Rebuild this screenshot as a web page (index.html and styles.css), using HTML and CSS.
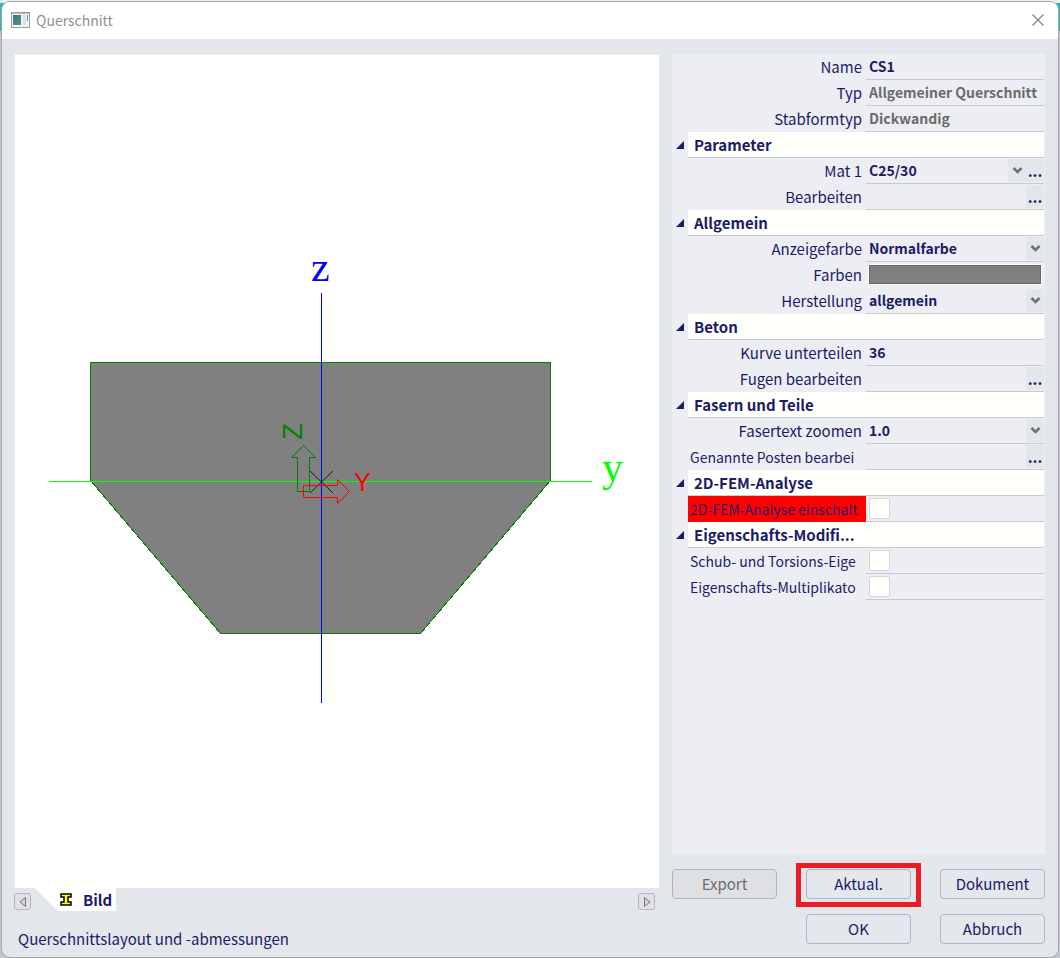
FILE: index.html
```html
<!DOCTYPE html>
<html lang="de">
<head>
<meta charset="utf-8">
<title>Querschnitt</title>
<link rel="stylesheet" href="styles.css">
</head>
<body>
<main class="dialog">
  <header class="titlebar">
    <svg class="app-icon" width="19" height="16" viewBox="0 0 19 16" aria-hidden="true">
      <defs><linearGradient id="app" x1="0" y1="0" x2="1" y2="1"><stop offset="0" stop-color="#3f6f9c"/><stop offset="1" stop-color="#4f9a70"/></linearGradient></defs>
      <rect x="0.5" y="0.5" width="18" height="15" fill="#f4f4f4" stroke="#9a9da8"/>
      <path d="M1 1.5h17" stroke="#b9bcc6"/>
      <rect x="2" y="3" width="8" height="10" fill="url(#app)"/>
      <rect x="12" y="3" width="3" height="10" fill="#e2e2e2"/>
      <path d="M16.500 3v6" stroke="#5c9a8c"/>
    </svg>
    <h1 class="title">Querschnitt</h1>
    <button class="close" aria-label="Schließen">
      <svg width="12" height="12" viewBox="0 0 12 12"><path d="M0.500 0.500l11 11M11.500 0.500l-11 11" stroke="#858585" stroke-width="1.200" fill="none"/></svg>
    </button>
  </header>

  <div class="content">
    <section class="preview">
      <svg class="drawing" viewBox="15 55 644 833" role="img" aria-label="Querschnitt">
        <g shape-rendering="crispEdges">
          <path d="M90.500 362.500H550.500V480.500L420.500 633.500H220.500L90.500 480.500Z" fill="#808080" stroke="#008000"/>
          <path d="M49 481.500H592" stroke="#00ff00"/>
          <path d="M321.500 293V703" stroke="#0000ff"/>
        </g>
        <path d="M310 471l23 22M333 471l-23 22" stroke="#1c1c1c"/>
        <path d="M297.500 491.500V457.500H291.500L303.500 445.500L315.500 457.500H309.500V491.500Z" fill="none" stroke="#008000"/>
        <path d="M303.500 485.500H337.500V479.500L349.500 491.500L337.500 503.500V497.500H303.500Z" fill="none" stroke="#ff0000"/>
        <text class="local-y" x="354" y="491">Y</text>
        <text class="local-z" transform="translate(302 440) rotate(-90)">Z</text>
        <text class="axis-z" x="311" y="281">z</text>
        <text class="axis-y" x="602" y="481">y</text>
      </svg>
      <nav class="tabs">
        <button class="scroll" aria-label="Zurück"><svg width="8" height="10" viewBox="0 0 8 10"><path d="M6.500 0.500V9.500L1 5Z" fill="#d5d5d5" stroke="#777"/></svg></button>
        <button class="tab">
          <svg width="12" height="13" viewBox="0 0 12 13" aria-hidden="true"><path d="M1 1H11V4H8V9H11V12H1V9H4V4H1Z" fill="#ffff00" stroke="#000" stroke-width="1.500"/></svg>
          Bild
        </button>
        <button class="scroll scroll-next" aria-label="Weiter"><svg width="8" height="10" viewBox="0 0 8 10"><path d="M1.500 0.500V9.500L7 5Z" fill="#d5d5d5" stroke="#777"/></svg></button>
      </nav>
      <p class="status">Querschnittslayout und -abmessungen</p>
    </section>

    <aside class="side">
      <div class="props">
        <div class="row"><label class="label" for="name">Name</label><div class="value"><input id="name" class="field" value="CS1"></div></div>
        <div class="row"><label class="label" for="typ">Typ</label><div class="value"><input id="typ" class="field muted" value="Allgemeiner Querschnitt" readonly></div></div>
        <div class="row"><label class="label" for="stab">Stabformtyp</label><div class="value"><input id="stab" class="field muted" value="Dickwandig" readonly></div></div>
        <h2 class="group"><span class="group-name">Parameter</span></h2>
        <div class="row"><label class="label" for="mat">Mat 1</label><div class="value"><select id="mat" class="field select"><option>C25/30</option></select><button class="more" aria-label="Mat 1 auswählen">...</button></div></div>
        <div class="row"><span class="label">Bearbeiten</span><div class="value"><button class="more" aria-label="Bearbeiten">...</button></div></div>
        <h2 class="group"><span class="group-name">Allgemein</span></h2>
        <div class="row"><label class="label" for="anz">Anzeigefarbe</label><div class="value"><select id="anz" class="field select"><option>Normalfarbe</option></select></div></div>
        <div class="row"><span class="label">Farben</span><div class="value plain"><button class="swatch" aria-label="Farben"></button></div></div>
        <div class="row"><label class="label" for="her">Herstellung</label><div class="value"><select id="her" class="field select"><option>allgemein</option></select></div></div>
        <h2 class="group"><span class="group-name">Beton</span></h2>
        <div class="row"><label class="label" for="kurve">Kurve unterteilen</label><div class="value"><input id="kurve" class="field" value="36"></div></div>
        <div class="row"><span class="label">Fugen bearbeiten</span><div class="value"><button class="more" aria-label="Fugen bearbeiten">...</button></div></div>
        <h2 class="group"><span class="group-name">Fasern und Teile</span></h2>
        <div class="row"><label class="label" for="faser">Fasertext zoomen</label><div class="value"><select id="faser" class="field select"><option>1.0</option></select></div></div>
        <div class="row"><span class="label long">Genannte Posten bearbei</span><div class="value"><button class="more" aria-label="Genannte Posten bearbeiten">...</button></div></div>
        <h2 class="group"><span class="group-name">2D-FEM-Analyse</span></h2>
        <div class="row"><label class="label long alert" for="fem">2D-FEM-Analyse einschalt</label><div class="value"><input id="fem" class="check" type="checkbox"></div></div>
        <h2 class="group"><span class="group-name">Eigenschafts-Modifi...</span></h2>
        <div class="row"><label class="label long" for="schub">Schub- und Torsions-Eige</label><div class="value"><input id="schub" class="check" type="checkbox"></div></div>
        <div class="row"><label class="label long" for="multi">Eigenschafts-Multiplikato</label><div class="value"><input id="multi" class="check" type="checkbox"></div></div>
      </div>
      <div class="actions">
        <button class="btn" disabled>Export</button>
        <button class="btn marked">Aktual.</button>
        <button class="btn">Dokument</button>
        <button class="btn ok">OK</button>
        <button class="btn">Abbruch</button>
      </div>
    </aside>
  </div>
</main>
</body>
</html>
```
FILE: styles.css
```css
* { box-sizing: border-box; }

body {
  margin: 0;
  padding: 1px 1px 0;
  min-height: 100vh;
  display: flex;
  background: linear-gradient(#eeeeee 3px, #21bdb4 3px, #21bdb4 31px, #c3c6d0 31px);
  color: #1b1b6a;
  font: 15px/22px "Noto Sans CJK JP", "Noto Sans", sans-serif;
}

button, input, select {
  font: inherit;
  color: inherit;
  margin: 0;
  padding: 0;
  border: 0;
  border-radius: 0;
  background: none;
}

.dialog {
  flex: 1;
  min-width: 0;
  display: flex;
  flex-direction: column;
  overflow: hidden;
  border: 1px solid #a5a5a8;
  border-radius: 9px;
  background: #e3e6eb;
}

.titlebar {
  display: flex;
  align-items: center;
  gap: 6px;
  height: 37px;
  padding: 0 14px 2px 9px;
  background: #fff;
}

.title {
  flex: 1;
  margin: 0;
  font-size: 14px;
  font-weight: 400;
  color: #929292;
}

.close { display: flex; }

.content {
  flex: 1;
  display: flex;
  gap: 12px;
  padding: 15px 13px 0 12px;
}

.preview {
  flex: 1;
  min-width: 0;
  display: flex;
  flex-direction: column;
}

.drawing {
  flex: 1;
  min-height: 0;
  width: 100%;
  background: #fff;
  border: 1px solid #f0f0ea;
  border-bottom: 0;
}

.axis-y, .axis-z { font: 42px "Liberation Serif", serif; }
.axis-y { fill: #00ff00; }
.axis-z { fill: #0000ff; }
.local-y { font: 25px "Liberation Sans", sans-serif; }
.local-z { font: 28px "Liberation Sans", sans-serif; }
.local-y { fill: #ff0000; }
.local-z { fill: #008000; }

.tabs {
  display: flex;
  align-items: flex-start;
  height: 40px;
}

.scroll {
  display: flex;
  align-items: center;
  justify-content: center;
  width: 17px;
  height: 17px;
  margin-top: 5px;
  border: 1px solid #b4b5ca;
  border-radius: 3px;
  background: #e0e2e6;
}

.scroll-next { margin: 5px 5px 0 auto; }

.tab {
  display: flex;
  align-items: center;
  gap: 11px;
  height: 23px;
  margin-left: 4px;
  padding: 0 4px 0 25px;
  background: #fff;
  clip-path: polygon(0 0, 100% 0, 100% 100%, 23px 100%);
  font-weight: 700;
}

.status { margin: 0; padding: 0 0 7px 4px; }

.side {
  flex: 0 0 373px;
  min-width: 0;
  display: flex;
  flex-direction: column;
}

.props {
  flex: 1;
  padding-right: 1px;
  background: #edeef3;
}

.row {
  display: flex;
  height: 26px;
  padding-left: 16px;
}

.label {
  flex: 0 0 178px;
  padding: 2px 4px 0 2px;
  overflow: hidden;
  text-align: right;
  white-space: nowrap;
}

.long { text-align: left; font-size: 14px; }
.alert { background: #ff0000; }

.value {
  flex: 1;
  min-width: 0;
  display: flex;
  justify-content: flex-end;
  padding: 1px 0 1px 3px;
  border-bottom: 1px solid #c8cad3;
}

.plain { border-bottom-color: transparent; padding: 0 2px; align-items: center; }

.field {
  flex: 1;
  min-width: 0;
  padding-bottom: 2px;
  font-size: 14px;
  font-weight: 700;
}

.muted { color: #6b6b6b; }

.select {
  appearance: none;
  background: no-repeat right / 18px 100% url("data:image/svg+xml,%3Csvg xmlns='http://www.w3.org/2000/svg' viewBox='0 0 18 23'%3E%3Cpath fill='%23e3e6eb' d='M0 0h18v23H0z'/%3E%3Cpath fill='none' stroke='%23707078' stroke-width='2.600' d='M5.500 9l4 4 4-4'/%3E%3C/svg%3E");
}

.more {
  width: 18px;
  background: #e3e6eb;
  font-weight: 700;
}

.swatch {
  flex: 1;
  height: 21px;
  border: 1px solid #fff;
  background: #808080;
  box-shadow: inset 0 0 0 1px #686868;
}

.check {
  appearance: none;
  width: 21px;
  height: 21px;
  margin: 1px auto 0 0;
  border: 1px solid #d5d5da;
  border-radius: 2px;
  background: #fffffb;
}

.group {
  display: flex;
  align-items: center;
  gap: 4px;
  height: 26px;
  margin: 0;
  padding-left: 4px;
  font-size: 15px;
  font-weight: 700;
}

.group::before {
  content: "";
  width: 8px;
  height: 8px;
  background: #1b1b6a;
  clip-path: polygon(100% 0, 100% 100%, 0 100%);
}

.group-name {
  flex: 1;
  height: 26px;
  padding: 2px 6px;
  border-bottom: 1px solid #c8cad3;
  background: #fffffb;
}

.actions {
  display: grid;
  grid-template-columns: repeat(3, 105px);
  justify-content: space-between;
  row-gap: 15px;
  padding: 15px 0 13px;
}

.btn {
  height: 30px;
  border: 1px solid #b1b2cb;
  border-radius: 4px;
  background: #e4e7ec;
}

.btn:disabled { color: #6c6c6c; background: #dfe0e4; }
.btn.ok { grid-column: 2; }

.marked { position: relative; }

.marked::after {
  content: "";
  position: absolute;
  inset: -7px -11px -9px;
  border: 5px solid #ed1c24;
}
```
